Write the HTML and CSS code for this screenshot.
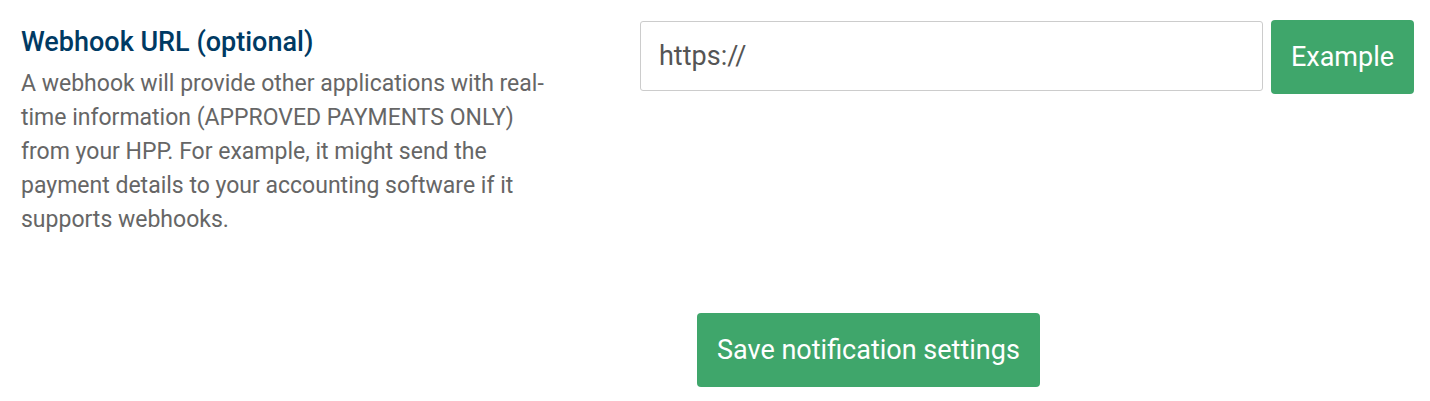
FILE: index.html
```html
<!DOCTYPE html>
<html>
<head>
<meta charset="utf-8">
<link rel="stylesheet" href="styles.css">
</head>
<body>
<div class="page">
  <div class="row">
    <div class="info">
      <h3 class="title">Webhook URL (optional)</h3>
      <p class="desc">A webhook will provide other applications with real-time information (APPROVED PAYMENTS ONLY) from your HPP. For example, it might send the payment details to your accounting software if it supports webhooks.</p>
    </div>
    <div class="field">
      <input class="url" type="text" value="https://">
      <button class="btn btn-example">Example</button>
    </div>
  </div>
  <div class="actions">
    <button class="btn btn-save">Save notification settings</button>
  </div>
</div>
</body>
</html>
```
FILE: styles.css
```css
html, body {
  margin: 0;
  padding: 0;
  background: #fff;
}
body {
  font-family: Roboto, "Liberation Sans", sans-serif;
}
.page {
  padding: 20px 16px 0 21px;
}
.row {
  display: flex;
  align-items: flex-start;
}
.info {
  width: 532px;
  margin-right: 87px;
  flex: none;
}
.title {
  margin: 4px 0 0;
  font-size: 27px;
  font-weight: 500;
  line-height: 36px;
  color: #003a63;
}
.desc {
  margin: 7px 0 0;
  font-size: 23px;
  line-height: 34px;
  color: #666;
}
.field {
  display: flex;
  align-items: flex-start;
  gap: 8px;
}
.url {
  box-sizing: border-box;
  width: 623px;
  height: 70px;
  margin-top: 1px;
  border: 1px solid #ccc;
  border-radius: 3px;
  padding: 0 18px;
  font-family: Roboto, "Liberation Sans", sans-serif;
  font-size: 27px;
  color: #555;
  outline: none;
}
.btn {
  border: none;
  border-radius: 4px;
  background: #3fa66b;
  color: #fff;
  font-family: Roboto, "Liberation Sans", sans-serif;
  font-size: 27px;
  cursor: pointer;
}
.btn-example {
  width: 143px;
  height: 74px;
  padding: 0;
}
.btn-save {
  height: 74px;
  padding: 0 20px;
}
.actions {
  margin-top: 76px;
  padding-left: 676px;
}
```
